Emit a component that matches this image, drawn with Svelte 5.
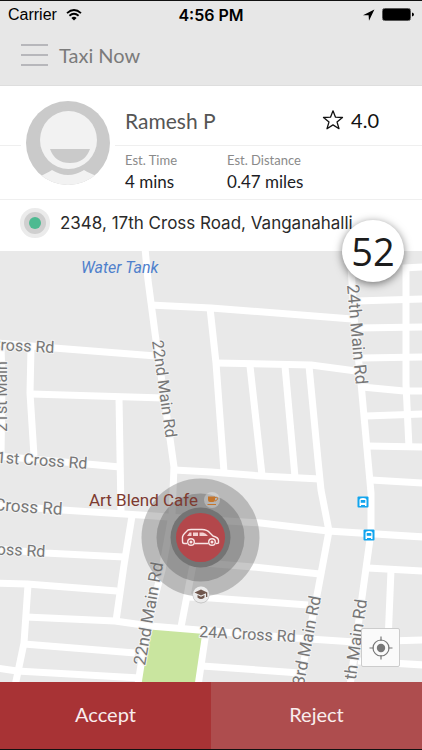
<script lang="ts">
	interface Label {
		text: string;
		x: number;
		y: number;
		angle: number;
		anchor: 'start' | 'middle' | 'end';
		large?: boolean;
	}

	const roads = [
		'M145 248L148 280L155 333L166 410L174 467L172 515L162 570L147 627L138 684',
		'M150 305L211 308L352 319',
		'M-4 343L54 348L156 356',
		'M31 348L30 393L34 456',
		'M31 394L164 398',
		'M119 398L121 512',
		'M1 345L2 380L1 457',
		'M-4 456L87 464L120 467',
		'M174 470L211 472L261 476L320 479',
		'M210 308L216 363L224 472',
		'M216 363L311 365L356 371',
		'M250 366L262 475',
		'M285 366L295 477',
		'M309 366L318 460L321 490L329 531L318 590L308 640L299 686',
		'M350 248L354 317L361 383L368 460L371 493L371 532L363 590L350 686',
		'M403 268L424 267',
		'M406 265L406 384L409 448',
		'M356 301L424 299',
		'M358 328L424 327',
		'M362 358L424 357',
		'M362 387L404 391L424 391',
		'M366 416L424 414',
		'M368 446L424 447',
		'M371 480L424 483',
		'M-4 505L62 510L140 515L211 520L261 523L328 531L424 537',
		'M-4 549L45 553L124 557',
		'M132 516L124 565L116 621',
		'M-4 583L27 584L117 591',
		'M28 585L24 643L15 686',
		'M26 617L115 621L150 626L211 631L294 638L355 642L424 640',
		'M24 644L135 653',
		'M-4 668L17 671L140 678',
		'M203 520L192 570L181 627',
		'M187 597L211 598L308 605',
		'M192 562L253 567L320 574',
		'M368 568L424 571',
		'M391 570L388 642',
		'M358 661L424 665',
		'M206 632L198 686',
		'M202 666L300 673'
	];

	const labels: Label[] = [
		{ text: 'Cross Rd', x: 54, y: 353, angle: 3, anchor: 'end' },
		{ text: '1st Cross Rd', x: 87, y: 469, angle: 4, anchor: 'end' },
		{ text: 'Cross Rd', x: 62, y: 515, angle: 4, anchor: 'end', large: true },
		{ text: 'oss Rd', x: 45, y: 557, angle: 3, anchor: 'end' },
		{ text: '24A Cross Rd', x: 199, y: 637, angle: 3, anchor: 'start' },
		{ text: '21st Main', x: 7, y: 432, angle: -90, anchor: 'start' },
		{ text: '22nd Main Rd', x: 152, y: 341, angle: 82, anchor: 'start' },
		{ text: '24th Main Rd', x: 347, y: 285, angle: 85, anchor: 'start', large: true },
		{ text: '22nd Main Rd', x: 145, y: 666, angle: -80, anchor: 'start', large: true },
		{ text: '3rd Main Rd', x: 321, y: 597, angle: -79, anchor: 'end', large: true },
		{ text: 'th Main Rd', x: 367, y: 600, angle: -82, anchor: 'end', large: true }
	];

	const stops = [
		{ x: 363, y: 502 },
		{ x: 369, y: 535 }
	];

	const trip = {
		driver: 'Ramesh P',
		rating: '4.0',
		time: '4 mins',
		distance: '0.47 miles',
		pickup: '2348, 17th Cross Road, Vanganahalli'
	};

	let secondsLeft = $state(52);
</script>

<main class="screen">
	<div class="status-bar">
		<div class="carrier">
			<span>Carrier</span>
			<svg width="16" height="12" viewBox="0 0 16 12">
				<path d="M1 4.2Q8-2.2 15 4.2M3.4 6.8Q8 2.8 12.6 6.8" fill="none" stroke="#000" stroke-width="1.8" />
				<path d="M5.4 8.9Q8 6.6 10.6 8.9L8 11.6Z" />
			</svg>
		</div>
		<span class="clock">4:56 PM</span>
		<div class="indicators">
			<svg width="12" height="12" viewBox="0 0 12 12">
				<path d="M11.4.6L0 6.2H5.6L6 11.8Z" />
			</svg>
			<svg width="32" height="14" viewBox="0 0 32 14">
				<rect x=".5" y=".5" width="28" height="12" rx="2" fill="none" stroke="#555" />
				<rect x="1" y="1" width="27" height="11" rx="1" />
				<path d="M30 4.5Q32 5 32 6.5T30 8.5Z" />
			</svg>
		</div>
	</div>

	<header class="title-bar">
		<button class="menu" aria-label="Menu">
			<span></span>
			<span></span>
			<span></span>
		</button>
		<h1>Taxi Now</h1>
	</header>

	<section class="trip">
		<div class="rider">
			<svg class="avatar" width="86" height="86" viewBox="0 0 86 86">
				<clipPath id="face"><circle cx="43" cy="43" r="42" /></clipPath>
				<g clip-path="url(#face)">
					<rect width="86" height="86" fill="#cacaca" />
					<path d="M12 78Q22 73 27 70Q43 80 59 70Q64 73 76 78V86H12Z" fill="#f2f2f2" />
				</g>
				<ellipse cx="43.500" cy="40" rx="31" ry="34" fill="#cacaca" />
				<ellipse cx="43.500" cy="40" rx="28.500" ry="29" fill="#f2f2f2" />
				<path d="M25 49H65Q60 63 45 63T25 49Z" fill="#cacaca" />
			</svg>
			<div class="details">
				<div class="name-row">
					<span class="name">{trip.driver}</span>
					<div class="rating">
						<svg width="22" height="22" viewBox="0 0 22 22">
							<path
								d="M11 1.800L13.500 8.200L20.500 8.500L15 12.900L17 19.700L11 15.900L5 19.700L7 12.900L1.500 8.500L8.500 8.200Z"
								fill="none"
								stroke="#111"
								stroke-width="1.300"
								stroke-linejoin="round"
							/>
						</svg>
						<span>{trip.rating}</span>
					</div>
				</div>
				<dl class="estimates">
					<div>
						<dt>Est. Time</dt>
						<dd>{trip.time}</dd>
					</div>
					<div>
						<dt>Est. Distance</dt>
						<dd>{trip.distance}</dd>
					</div>
				</dl>
			</div>
		</div>
		<div class="pickup">
			<span class="dot"></span>
			<span class="address">{trip.pickup}</span>
		</div>
	</section>

	<section class="map">
		<svg class="canvas" viewBox="0 251 422 431" preserveAspectRatio="xMidYMid slice">
			<path class="park" d="M153 628L204 632L197 684H139Z" />
			{#each roads as d}
				<path class="road" {d} />
			{/each}
			{#each labels as label}
				<text
					class="street"
					class:large={label.large}
					text-anchor={label.anchor}
					transform="translate({label.x} {label.y}) rotate({label.angle})">{label.text}</text
				>
			{/each}
			<text class="water" x="81" y="273">Water Tank</text>

			{#each stops as stop}
				<g transform="translate({stop.x} {stop.y})">
					<rect x="-5.500" y="-5.500" width="11" height="11" rx="1" fill="#12a5ee" />
					<path d="M-3.500 4V-2Q-3.500-4 0-4T3.500-2V4H2V3H-2V4Z" fill="#fff" />
					<path d="M-2.300-2H2.300V.8H-2.300Z" fill="#12a5ee" />
				</g>
			{/each}

			<circle cx="200.500" cy="537.500" r="59" class="halo" />
			<circle cx="200.500" cy="537.500" r="44" class="halo inner" />
			<circle cx="200.500" cy="537.500" r="30" class="ring" />

			<text class="place" x="89" y="506">Art Blend Cafe</text>
			<circle cx="212" cy="500" r="8" fill="#fff" opacity=".3" />
			<path d="M208 496.500H215V500Q215 502 213 502H210Q208 502 208 500ZM207.500 504H216V505H207.500Z" fill="#c4752c" />
			<path d="M215 497.500Q218.500 497 217.500 499T215 501" fill="none" stroke="#c4752c" />
			<circle cx="201" cy="595" r="8.500" fill="#c4c4c4" />
			<circle cx="201" cy="594.500" r="8" fill="#ececec" />
			<path
				d="M201 589.500L194.500 592.500L201 595.500L206 593.200V597H207.300V592.500ZM197.500 595V597.500Q201 600.500 204.500 597.500V595L201 596.700Z"
				fill="#70574d"
			/>

			<circle cx="200.500" cy="537.500" r="24.500" fill="#b3474b" />
			<g class="car">
				<path
					d="M187 543.500H184Q182.500 543.500 182.500 541V537Q183 535 184.500 533.500L188 530Q189 529.500 191 529.500H202Q207 529.500 210 533L213 536Q218.500 537.500 218.500 540.500V543Q218 543.500 216 543.500M194.500 543.500H208.500"
				/>
				<circle cx="191" cy="542" r="3.300" />
				<circle cx="212" cy="542" r="3.300" />
				<circle cx="191" cy="542" r=".8" />
				<circle cx="212" cy="542" r=".8" />
			</g>
			<path
				d="M187 536L189.500 532.500H191.500V536ZM193 532.500H198V536H193ZM199.500 532.500H203Q206 533 208 536H199.500Z"
				fill="#f3cfd0"
			/>
		</svg>

		<div class="countdown">{secondsLeft}</div>

		<button class="locate" aria-label="My location">
			<svg width="24" height="24" viewBox="0 0 24 24">
				<g fill="none" stroke="#777" stroke-width="1.200">
					<circle cx="12" cy="12" r="8" />
					<path d="M12 .5V5M12 19V23.500M.5 12H5M19 12H23.500" />
				</g>
				<circle cx="12" cy="12" r="4.200" fill="#777" />
			</svg>
		</button>
	</section>

	<footer class="actions">
		<button class="accept">Accept</button>
		<button class="reject">Reject</button>
	</footer>
</main>

<style>
	:global(body) {
		margin: 0;
	}

	.screen {
		display: flex;
		flex-direction: column;
		box-sizing: border-box;
		min-height: 100vh;
		border-top: 1px solid #111;
		border-bottom: 1px solid #111;
		background: #e7e7e7;
		font-family: Lato, sans-serif;
	}

	button {
		padding: 0;
		border: none;
		font-family: inherit;
		cursor: pointer;
	}

	.status-bar {
		display: grid;
		grid-template-columns: 1fr auto 1fr;
		align-items: center;
		height: 28px;
		padding: 0 8px;
		font-family: Inter, sans-serif;
		font-size: 16px;
		color: #000;
	}

	.carrier {
		display: flex;
		align-items: center;
		gap: 9px;
	}

	.carrier span {
		font-family: 'Liberation Sans', sans-serif;
	}

	.clock {
		font-weight: 600;
	}

	.indicators {
		display: flex;
		align-items: center;
		justify-content: flex-end;
		gap: 7px;
	}

	.title-bar {
		display: flex;
		align-items: center;
		gap: 11px;
		height: 57px;
		padding: 0 21px 4px;
		box-sizing: border-box;
		border-bottom: 1px solid #dedede;
	}

	.menu {
		display: flex;
		flex-direction: column;
		gap: 8px;
		width: 27px;
		background: none;
	}

	.menu span {
		height: 2px;
		background: #b7b7bb;
	}

	h1 {
		margin: 0;
		font-size: 20px;
		font-weight: 400;
		line-height: 24px;
		color: #7b7b7b;
	}

	.trip {
		background: #fff;
	}

	.rider {
		display: flex;
		align-items: center;
		height: 114px;
		background: linear-gradient(#efefef, #efefef) 0 59px / 100% 1px no-repeat;
		border-bottom: 1px solid #efefef;
		box-sizing: border-box;
	}

	.avatar {
		flex-shrink: 0;
		margin-left: 21px;
		padding: 0 4px;
		background: #fff;
	}

	.details {
		flex: 1;
		padding: 0 43px 0 10px;
	}

	.name-row {
		display: flex;
		align-items: center;
		justify-content: space-between;
		height: 60px;
		padding-top: 8px;
		box-sizing: border-box;
	}

	.name {
		font-size: 21px;
		color: #555;
	}

	.rating {
		display: flex;
		align-items: center;
		gap: 7px;
		font-size: 20px;
		color: #111;
	}

	.estimates {
		display: flex;
		gap: 50px;
		height: 53px;
		margin: 0;
		padding-top: 4px;
		box-sizing: border-box;
	}

	dt {
		font-size: 13px;
		line-height: 20px;
		color: #8a8a8a;
	}

	dd {
		margin: 0;
		font-size: 17px;
		line-height: 24px;
		color: #1c1c24;
	}

	.pickup {
		display: flex;
		align-items: center;
		gap: 14px;
		height: 51px;
		padding: 0 24px 5px;
		box-sizing: border-box;
	}

	.dot {
		width: 12px;
		height: 12px;
		margin: 5px;
		border-radius: 50%;
		background: #4dba91;
		box-shadow:
			0 0 0 5px #cfcfcf,
			0 0 0 9px #ebebeb;
	}

	.address {
		font-family: Inter, sans-serif;
		font-size: 17px;
		white-space: nowrap;
		color: #2a2a2a;
	}

	.map {
		position: relative;
		flex: 1;
		min-height: 320px;
		background: #e9e9e9;
	}

	.canvas {
		position: absolute;
		inset: 0;
		width: 100%;
		height: 100%;
	}

	.park {
		fill: #c9e59f;
	}

	.road {
		fill: none;
		stroke: #fff;
		stroke-width: 7px;
		stroke-linejoin: round;
	}

	.street,
	.water,
	.place {
		font-family: Roboto, sans-serif;
		font-size: 16px;
	}

	.street {
		fill: #777;
		stroke: #f4f4f4;
		stroke-width: 2px;
		stroke-linejoin: round;
		paint-order: stroke;
	}

	.large {
		font-size: 17px;
	}

	.water {
		font-style: italic;
		fill: #4f80cc;
	}

	.place {
		font-size: 17px;
		fill: #7d3a30;
	}

	.halo {
		fill: rgba(95, 95, 95, 0.34);
	}

	.inner {
		fill: rgba(95, 95, 95, 0.4);
	}

	.ring {
		fill: #747474;
	}

	.car {
		fill: none;
		stroke: #f8e5e5;
		stroke-width: 1.4px;
		stroke-linejoin: round;
	}

	.countdown {
		position: absolute;
		top: -31px;
		right: 18px;
		width: 62px;
		height: 62px;
		border-radius: 50%;
		background: #fff;
		box-shadow: 0 2px 8px rgba(0, 0, 0, 0.5);
		font-family: 'Open Sans', sans-serif;
		font-size: 38px;
		line-height: 62px;
		text-align: center;
		color: #1c1c1c;
	}

	.locate {
		position: absolute;
		right: 22px;
		bottom: 15px;
		display: grid;
		place-items: center;
		width: 39px;
		height: 39px;
		border: 1px solid #ccc;
		border-radius: 2px;
		background: #fafafa;
	}

	.actions {
		display: grid;
		grid-template-columns: 1fr 1fr;
		height: 67px;
	}

	.actions button {
		padding-bottom: 4px;
		font-size: 20px;
		color: #f9eded;
	}

	.accept {
		background: #a83335;
	}

	.reject {
		background: #ae4d4e;
	}
</style>
